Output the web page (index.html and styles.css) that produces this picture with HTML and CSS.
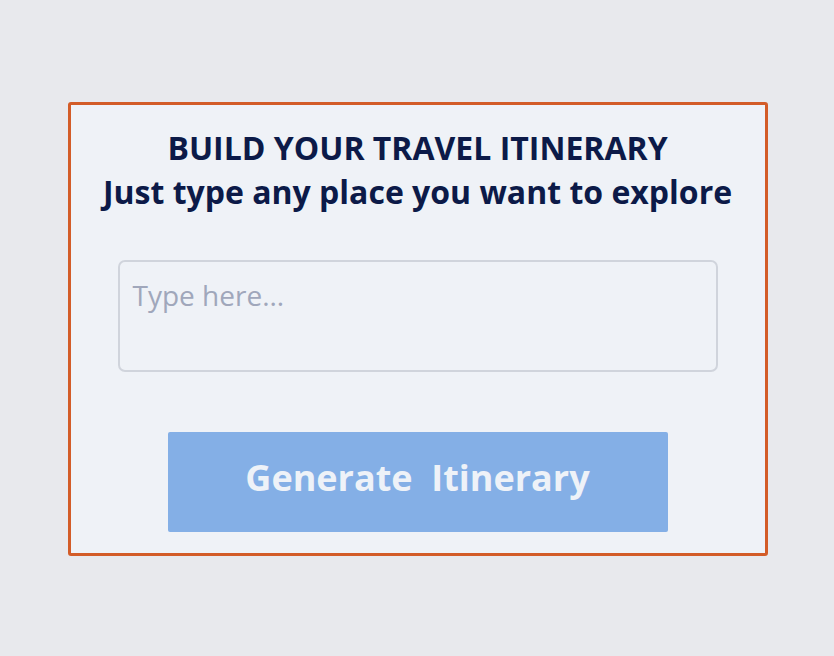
FILE: index.html
```html
<!DOCTYPE html>
<html>
<head>
<meta charset="utf-8">
<link rel="stylesheet" href="styles.css">
</head>
<body>
<div class="page">
  <div class="card">
    <h1 class="title">BUILD YOUR TRAVEL ITINERARY</h1>
    <h2 class="subtitle">Just type any place you want to explore</h2>
    <textarea class="input" placeholder="Type here..."></textarea>
    <button class="btn">Generate&nbsp; Itinerary</button>
  </div>
</div>
</body>
</html>
```
FILE: styles.css
```css
html, body {
  margin: 0;
  padding: 0;
  background: #e8e9ed;
  font-family: "Open Sans", "Noto Sans", sans-serif;
}
.page {
  width: 834px;
  height: 656px;
  padding-top: 102px;
  box-sizing: border-box;
  display: flex;
  justify-content: center;
}
.card {
  width: 700px;
  height: 454px;
  box-sizing: border-box;
  margin-left: 1px;
  border: 3px solid #d35c28;
  border-radius: 3px;
  background: #eff2f7;
  display: flex;
  flex-direction: column;
  align-items: center;
  padding-top: 21px;
}
.title {
  margin: 0;
  font-size: 32px;
  font-weight: 700;
  line-height: 44px;
  color: #0c1a48;
  white-space: nowrap;
}
.subtitle {
  margin: 0;
  font-size: 32px;
  font-weight: 700;
  line-height: 44px;
  color: #0c1a48;
  white-space: nowrap;
}
.input {
  margin-top: 46px;
  width: 600px;
  height: 112px;
  box-sizing: border-box;
  border: 2px solid #d0d4dc;
  border-radius: 7px;
  background: #eff2f7;
  padding: 14px 13px;
  font-family: "Open Sans", sans-serif;
  font-size: 28px;
  resize: none;
  outline: none;
  color: #0c1a48;
}
.input::placeholder {
  color: #a0a7bb;
}
.btn {
  margin-top: 60px;
  width: 500px;
  height: 100px;
  border: none;
  border-radius: 2px;
  background: #84afe6;
  color: #eef2f8;
  font-family: "Open Sans", sans-serif;
  font-size: 36px;
  font-weight: 700;
  padding: 0 0 10px 0;
}
```
